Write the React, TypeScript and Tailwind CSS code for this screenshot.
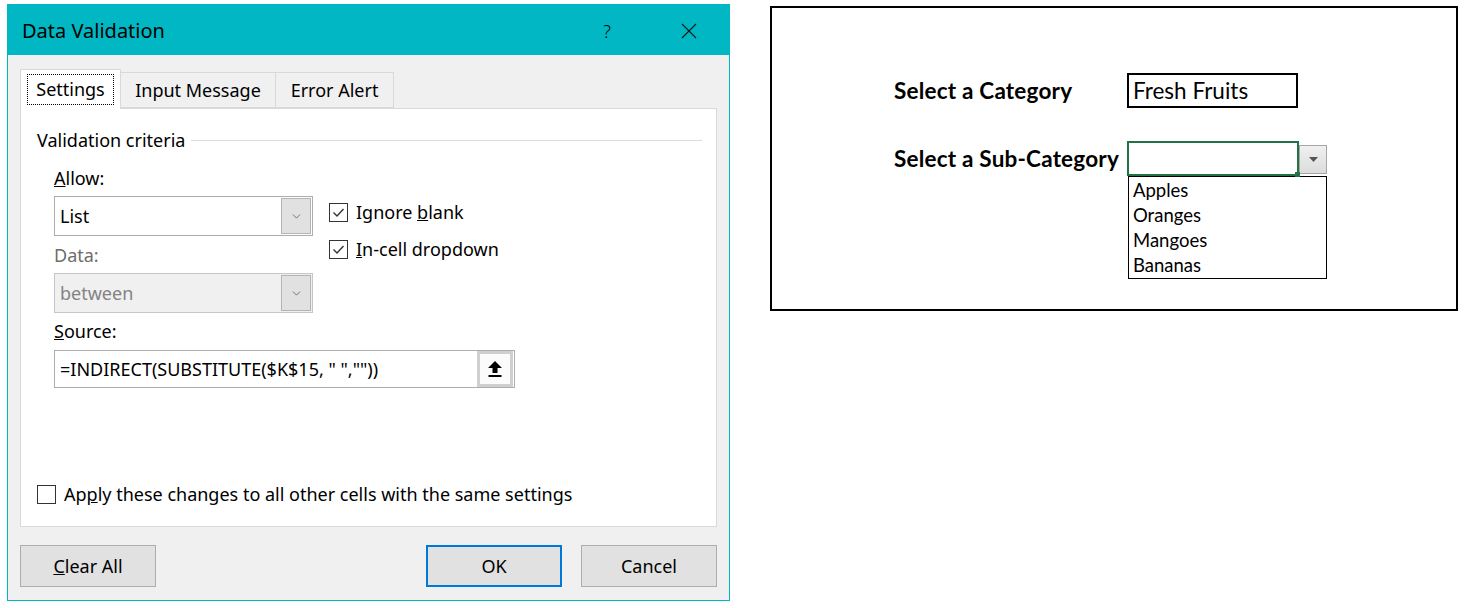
import { ChevronDown } from 'lucide-react'

const ui = { fontFamily: '"Noto Sans", "Segoe UI", sans-serif' }
const sheet = { fontFamily: 'Lato, Calibri, sans-serif' }

function CheckBox({ checked }: { checked?: boolean }) {
  return (
    <span className="flex h-[19px] w-[19px] shrink-0 items-center justify-center border border-[#333] bg-white">
      {checked && (
        <svg width="13" height="11" viewBox="0 0 13 11" fill="none">
          <polyline points="1.5,5.5 5,9 11.5,2" stroke="#333" strokeWidth="1.4" />
        </svg>
      )}
    </span>
  )
}

function ComboBox({ value, disabled }: { value: string; disabled?: boolean }) {
  return (
    <div
      className={`flex h-[40px] w-[259px] items-center justify-between border pl-[5px] pr-[1px] ${
        disabled ? 'border-[#c6c6c6] bg-[#f0f0f0] text-[#838383]' : 'border-[#adadad] bg-white text-black'
      }`}
    >
      <span>{value}</span>
      <span className="flex h-[36px] w-[30px] items-center justify-center border border-[#b4b4b4] bg-[#e1e1e1]">
        <ChevronDown size={13} strokeWidth={1.3} className="text-[#444]" />
      </span>
    </div>
  )
}

function DialogButton({ children, primary }: { children: React.ReactNode; primary?: boolean }) {
  return (
    <button
      className={`flex h-[42px] w-[136px] items-center justify-center bg-[#e1e1e1] text-black ${
        primary ? 'border-2 border-[#0078d7]' : 'border border-[#adadad]'
      }`}
    >
      {children}
    </button>
  )
}

function DataValidationDialog() {
  return (
    <div className="ml-[7px] mt-[4px] flex h-[597px] w-[723px] flex-col border border-t-0 border-[#00b7c3] text-[18px]" style={ui}>
      <div className="flex h-[51px] shrink-0 items-center bg-[#00b7c3] pl-[14px] pr-[32px] pt-[3px] text-[20px] text-black">
        <span className="flex-1">Data Validation</span>
        <span className="mr-[70px] text-[18px] font-light">?</span>
        <svg width="16" height="16" viewBox="0 0 16 16" stroke="#1a1a1a" strokeWidth="1.1">
          <line x1="1" y1="1" x2="15" y2="15" />
          <line x1="15" y1="1" x2="1" y2="15" />
        </svg>
      </div>

      <div className="flex flex-1 flex-col bg-[#f0f0f0] px-[12px]">
        {/* tabs */}
        <div className="mt-[14px] flex items-end">
          <div className="relative z-10 -mb-px flex h-[40px] w-[101px] items-center justify-center border border-b-0 border-[#d9d9d9] bg-white">
            <span className="border border-dotted border-black px-[8px] py-[2px] leading-[25px]">Settings</span>
          </div>
          <div className="flex h-[36px] w-[155px] items-center justify-center border border-l-0 border-[#d9d9d9]">Input Message</div>
          <div className="flex h-[36px] w-[118px] items-center justify-center border border-l-0 border-[#d9d9d9]">Error Alert</div>
        </div>

        {/* tab panel */}
        <div className="flex h-[419px] w-[697px] flex-col border border-[#d9d9d9] bg-white pl-[16px] pr-[14px] pt-[19px] pb-[20px]">
          <div className="flex h-[24px] items-center gap-[6px]">
            <span>Validation criteria</span>
            <span className="h-px flex-1 bg-[#dcdcdc]" />
          </div>

          <div className="ml-[17px] mt-[14px] flex gap-[16px]">
            <div className="flex flex-col">
              <span className="leading-[24px]"><span className="underline">A</span>llow:</span>
              <div className="mt-[6px]"><ComboBox value="List" /></div>
              <span className="mt-[7px] leading-[24px] text-[#6d6d6d]">Data:</span>
              <div className="mt-[6px]"><ComboBox value="between" disabled /></div>
            </div>
            <div className="mt-[34px] flex flex-col gap-[13px]">
              <label className="flex h-[24px] items-center gap-[8px]">
                <CheckBox checked />
                <span>Ignore <span className="underline">b</span>lank</span>
              </label>
              <label className="flex h-[24px] items-center gap-[8px]">
                <CheckBox checked />
                <span><span className="underline">I</span>n-cell dropdown</span>
              </label>
            </div>
          </div>

          <div className="ml-[17px] mt-[6px] flex flex-col">
            <span className="leading-[24px]"><span className="underline">S</span>ource:</span>
            <div className="mt-[7px] flex h-[38px] w-[461px] items-center justify-between border border-[#adadad] bg-white pl-[5px] pr-[1px]">
              <span>=INDIRECT(SUBSTITUTE($K$15, " ",""))</span>
              <span className="flex h-[36px] w-[36px] items-center justify-center border-[3px] border-[#cfcfcf] bg-[#fbfbfb]">
                <svg width="16" height="18" viewBox="0 0 16 18" fill="#000">
                  <polygon points="8,1 15,8 10.5,8 10.5,13 5.5,13 5.5,8 1,8" />
                  <rect x="1.5" y="15" width="13" height="2" />
                </svg>
              </span>
            </div>
          </div>

          <label className="mt-auto flex h-[24px] items-center gap-[8px]">
            <CheckBox />
            <span>Ap<span className="underline">p</span>ly these changes to all other cells with the same settings</span>
          </label>
        </div>

        {/* buttons */}
        <div className="mt-[18px] flex">
          <DialogButton><span><span className="underline">C</span>lear All</span></DialogButton>
          <div className="flex-1" />
          <DialogButton primary>OK</DialogButton>
          <div className="w-[19px]" />
          <DialogButton>Cancel</DialogButton>
        </div>
      </div>
    </div>
  )
}

function SheetPreview() {
  const items = ['Apples', 'Oranges', 'Mangoes', 'Bananas']
  return (
    <div className="ml-[40px] mt-[6px] h-[305px] w-[688px] border-2 border-black bg-white pl-[122px] pt-[65px] text-black" style={sheet}>
      <div className="flex h-[35px] items-center">
        <span className="w-[233px] text-[22.5px] font-bold tracking-[0.2px]">Select a Category</span>
        <span className="flex h-[35px] w-[171px] items-center border-2 border-black pl-[4px] text-[22.5px]">Fresh Fruits</span>
      </div>

      <div className="mt-[33px] flex">
        <span className="flex h-[35px] w-[233px] items-center text-[22.5px] font-bold tracking-[0.2px]">Select a Sub-Category</span>
        <div className="flex flex-col">
          <div className="flex items-start">
            <span className="relative h-[35px] w-[172px] border-2 border-[#217346]">
              <span className="absolute -bottom-[3px] -right-[3px] h-[5px] w-[5px] bg-[#217346]" />
            </span>
            <span className="mt-[4px] flex h-[29px] w-[28px] items-center justify-center border border-[#a6a6a6] bg-gradient-to-b from-[#f0f0f0] to-[#dcdcdc]">
              <svg width="9" height="5" viewBox="0 0 9 5"><polygon points="0,0 9,0 4.5,5" fill="#555" /></svg>
            </span>
          </div>
          <div className="ml-px flex w-[199px] flex-col border border-black bg-white pl-[4px] pt-[1px] text-[18.5px]">
            {items.map((item) => (
              <span key={item} className="h-[25px] leading-[25px]">{item}</span>
            ))}
          </div>
        </div>
      </div>
    </div>
  )
}

export default function App() {
  return (
    <div className="flex h-[608px] w-[1467px] items-start bg-white">
      <DataValidationDialog />
      <SheetPreview />
    </div>
  )
}
